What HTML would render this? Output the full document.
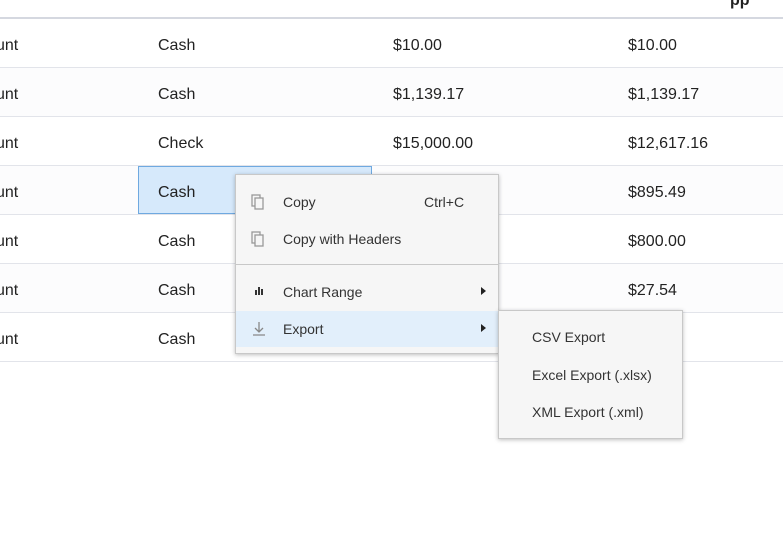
<!DOCTYPE html>
<html><head><style>
body{margin:0;width:783px;height:541px;background:#fff;font-family:"Liberation Sans",sans-serif;position:relative;overflow:hidden;color:#222}
.hdr{position:absolute;left:0;top:0;width:783px;height:17px;border-bottom:2px solid #d5d8e0}
.row{position:absolute;left:0;width:783px;height:48px;border-bottom:1px solid #e2e4ea;font-size:16px}
.row span{position:absolute;top:18px}
.alt{background:#fcfcfd}
.sel{position:absolute;left:138px;top:0;width:232px;height:46px;background:#d6e9fb;border:1px solid #6fa9e0}
.menu{position:absolute;background:#f6f6f6;border:1px solid #c8c8c8;box-shadow:0 1px 4px rgba(0,0,0,.25);font-size:14px;color:#333}
.mi{position:absolute;left:0;right:0;height:36px}
.mi span{position:absolute;top:10px}
.arrow{position:absolute;right:12px;top:13px;width:0;height:0;border-left:5px solid #222;border-top:4px solid transparent;border-bottom:4px solid transparent}
</style></head><body>
<div class="hdr"><span style="position:absolute;left:730px;top:-8px;font-weight:bold;font-size:16px">pp</span></div>
<div class="row" style="top:19px"><span style="left:-4px">unt</span><span style="left:158px">Cash</span><span style="left:393px">$10.00</span><span style="left:628px">$10.00</span></div>
<div class="row alt" style="top:68px"><span style="left:-4px">unt</span><span style="left:158px">Cash</span><span style="left:393px">$1,139.17</span><span style="left:628px">$1,139.17</span></div>
<div class="row" style="top:117px"><span style="left:-4px">unt</span><span style="left:158px">Check</span><span style="left:393px">$15,000.00</span><span style="left:628px">$12,617.16</span></div>
<div class="row alt" style="top:166px"><div class="sel"></div><span style="left:-4px">unt</span><span style="left:158px">Cash</span><span style="left:628px">$895.49</span></div>
<div class="row" style="top:215px"><span style="left:-4px">unt</span><span style="left:158px">Cash</span><span style="left:628px">$800.00</span></div>
<div class="row alt" style="top:264px"><span style="left:-4px">unt</span><span style="left:158px">Cash</span><span style="left:628px">$27.54</span></div>
<div class="row" style="top:313px"><span style="left:-4px">unt</span><span style="left:158px">Cash</span></div>

<div class="menu" style="left:235px;top:174px;width:262px;height:178px">
 <div class="mi" style="top:9px"><svg style="position:absolute;left:15px;top:10px" width="14" height="16"><rect x="1" y="1" width="8" height="11" fill="none" stroke="#999" stroke-width="1.3"/><rect x="4" y="4" width="8" height="11" fill="#f6f6f6" stroke="#999" stroke-width="1.3"/></svg><span style="left:47px">Copy</span><span style="left:188px">Ctrl+C</span></div>
 <div class="mi" style="top:46px"><svg style="position:absolute;left:15px;top:10px" width="14" height="16"><rect x="1" y="1" width="8" height="11" fill="none" stroke="#999" stroke-width="1.3"/><rect x="4" y="4" width="8" height="11" fill="#f6f6f6" stroke="#999" stroke-width="1.3"/></svg><span style="left:47px">Copy with Headers</span></div>
 <div style="position:absolute;left:0;right:0;top:89px;border-top:1px solid #c8c8c8"></div>
 <div class="mi" style="top:99px"><svg style="position:absolute;left:18px;top:12px" width="10" height="10"><rect x="1" y="4" width="2" height="5" fill="#333"/><rect x="4" y="1" width="2" height="8" fill="#333"/><rect x="7" y="3" width="2" height="6" fill="#333"/></svg><span style="left:47px">Chart Range</span><div class="arrow"></div></div>
 <div class="mi" style="top:136px;background:#e2effb"><svg style="position:absolute;left:15px;top:10px" width="16" height="16"><path d="M8 1v10M4 7l4 4 4-4M2 14h12" fill="none" stroke="#888" stroke-width="1.3"/></svg><span style="left:47px">Export</span><div class="arrow"></div></div>
</div>
<div class="menu" style="left:498px;top:310px;width:183px;height:127px">
 <div class="mi" style="top:8px"><span style="left:33px">CSV Export</span></div>
 <div class="mi" style="top:46px"><span style="left:33px">Excel Export (.xlsx)</span></div>
 <div class="mi" style="top:83px"><span style="left:33px">XML Export (.xml)</span></div>
</div>
</body></html>
